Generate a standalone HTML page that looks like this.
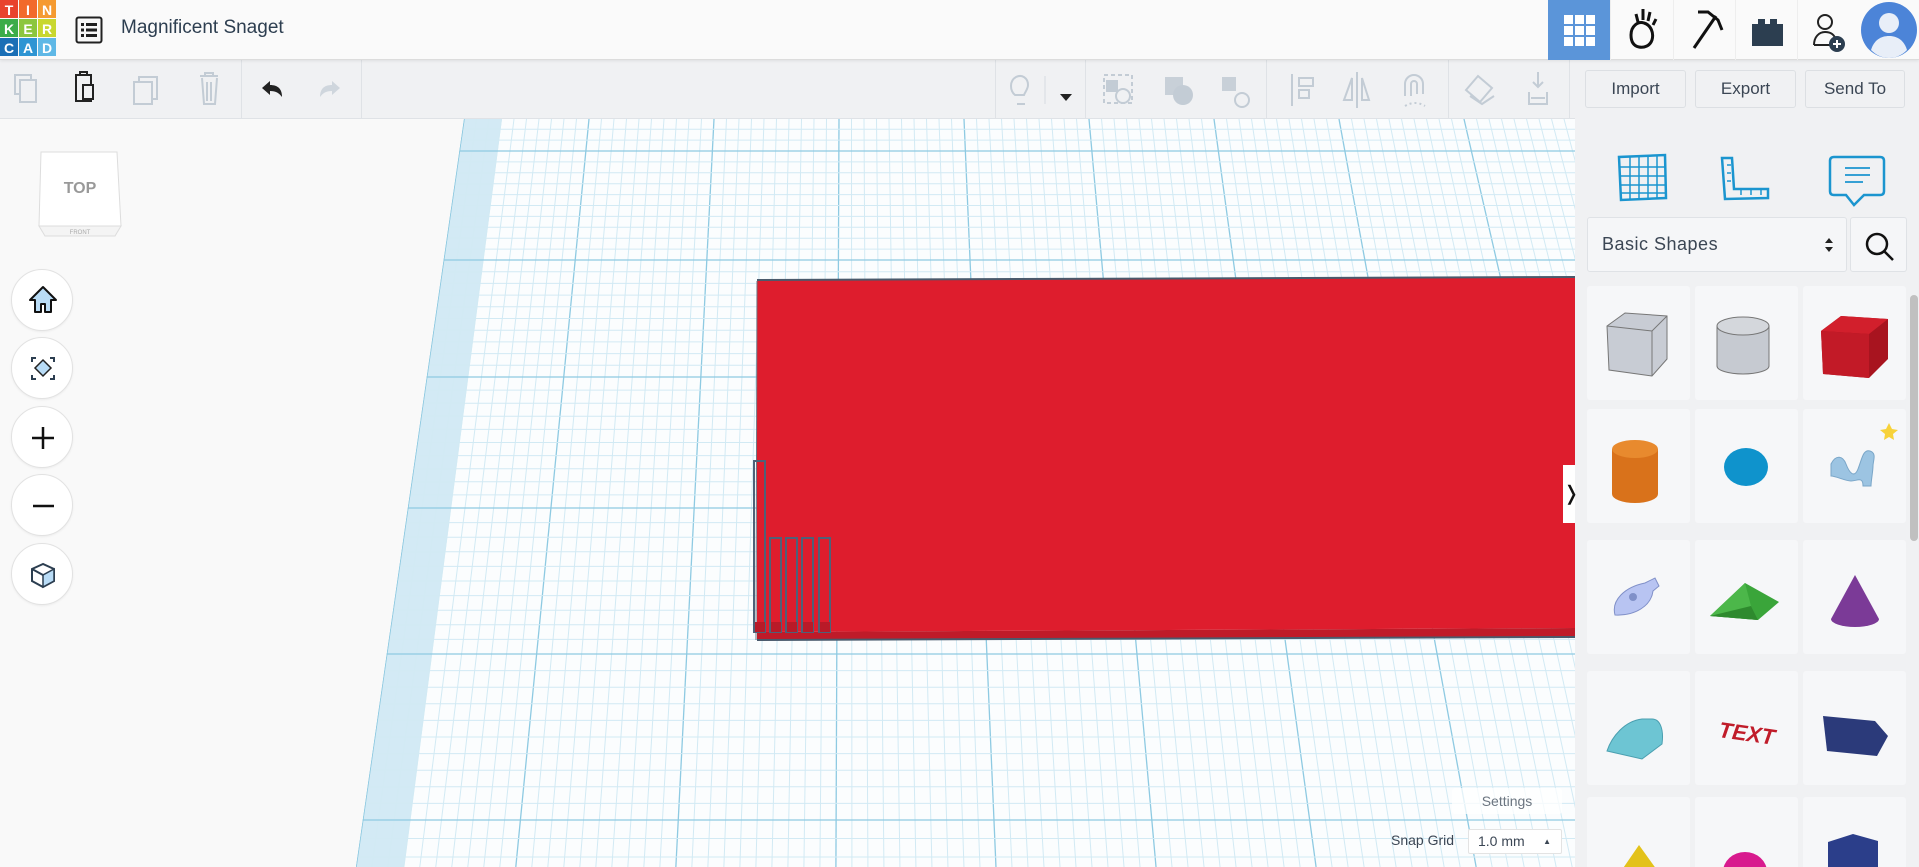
<!DOCTYPE html>
<html style="overflow:hidden;width:1919px;height:867px"><head><meta charset="utf-8">
<style>
*{margin:0;padding:0;box-sizing:border-box}
body{width:1919px;height:867px;overflow:hidden;background:#f9f9f9;font-family:"Liberation Sans",sans-serif;position:relative}
.abs{position:absolute}
#hdr{left:0;top:0;width:1919px;height:60px;background:#fafafa;border-bottom:1px solid #dcdcdc;box-shadow:0 1px 3px rgba(0,0,0,.08);z-index:5}
#tb{left:0;top:60px;width:1575px;height:59px;background:#f0f1f3;border-bottom:1px solid #dfe2e6;z-index:4}
.sep{position:absolute;top:0;width:1px;height:59px;background:#dfe2e6}
.btn{position:absolute;top:10px;height:38px;border:1px solid #dcdfe3;border-radius:3px;background:#f0f1f3;font-size:17px;color:#3b4654;text-align:center;line-height:36px}
#rp{left:1575px;top:60px;width:344px;height:807px;background:#f0f1f3;z-index:3;overflow:hidden}
.tile{position:absolute;width:103px;height:114px;background:#f6f7f9;border-radius:3px}
.nav{position:absolute;left:11px;width:62px;height:62px;border-radius:50%;background:#fff;border:1px solid #e2e2e2;box-shadow:0 1px 2px rgba(0,0,0,.06)}
.hc{position:absolute;top:0;width:62px;height:60px;border-left:1px solid #eee}
</style></head><body>

<svg class="abs" style="left:0;top:0" width="1919" height="867" id="grid">
<defs><clipPath id="gc"><polygon points="464,119 1575,119 1575,867 356,867"/></clipPath></defs>
<polygon points="464,119 1575,119 1575,867 356,867" fill="#fbfdfe"/>
<g clip-path="url(#gc)" id="gl"></g>
</svg>

<svg class="abs" style="left:0;top:0;z-index:2" width="1575" height="867">
<polygon points="757,280 1575,277 1575,628 757,632" fill="#de1d2d"/>
<line x1="757" y1="280" x2="1575" y2="277" stroke="#4a5a6c" stroke-width="2"/>
<polygon points="757,632 1575,628 1575,637 757,640" fill="#bf1b29"/>
<line x1="757" y1="640" x2="1575" y2="637" stroke="#4a5a6c" stroke-width="2"/>
<line x1="757" y1="281" x2="756" y2="640" stroke="#6a7480" stroke-width="1"/>
<g fill="none" stroke="#4e6178" stroke-width="2">
<rect x="754" y="461" width="11" height="171"/>
<rect x="770" y="538" width="11" height="94"/>
<rect x="786" y="538" width="11" height="94"/>
<rect x="802" y="538" width="11" height="94"/>
<rect x="819" y="538" width="11" height="94"/>
</g>
<g fill="#b91a28"><rect x="755" y="622" width="10" height="10"/><rect x="771" y="622" width="10" height="10"/><rect x="787" y="622" width="10" height="10"/><rect x="803" y="622" width="10" height="10"/><rect x="820" y="622" width="10" height="10"/></g>
</svg>

<script>
(function(){
var g=document.getElementById('gl'),s='';
var VX=850,VY=-2548;
function xa(x0,y){return VX+(x0-VX)*(y-VY)/(119-VY);}
s+='<polygon points="'+xa(464,119)+',119 '+xa(502,119)+',119 '+xa(502,867)+',867 '+xa(464,867)+',867" fill="#d3eaf5"/>';
for(var k=0;k<100;k++){var x0=464+12.5*k;var maj=(k%10==0);
s+='<line x1="'+xa(x0,119)+'" y1="119" x2="'+xa(x0,867)+'" y2="867" stroke="'+(maj?'#8ecae2':'#d2eaf4')+'" stroke-width="'+(maj?1.3:1)+'"/>';}
var M=[42,151,260,377,508,654,820,1005];
for(var i=0;i<M.length-1;i++){for(var j=0;j<10;j++){var y=M[i]+(M[i+1]-M[i])*j/10;var maj=j==0;
s+='<line x1="300" y1="'+y+'" x2="1575" y2="'+y+'" stroke="'+(maj?'#8ecae2':'#d2eaf4')+'" stroke-width="'+(maj?1.3:1)+'"/>';}}
s+='<line x1="464" y1="119" x2="356" y2="867" stroke="#8cc8e0" stroke-width="1.5"/>';
g.innerHTML=s;})();
</script>

<div id="hdr" class="abs">
 <svg class="abs" style="left:0;top:0" width="57" height="57">
  <g font-family="Liberation Sans" font-weight="bold" font-size="14" fill="#fff" text-anchor="middle">
  <rect x="0" y="0" width="18" height="18" fill="#e8432d"/><text x="9" y="15">T</text>
  <rect x="19" y="0" width="18" height="18" fill="#f26a2b"/><text x="28" y="15">I</text>
  <rect x="38" y="0" width="18" height="18" fill="#f59a30"/><text x="47" y="15">N</text>
  <rect x="0" y="19" width="18" height="18" fill="#3cac49"/><text x="9" y="34">K</text>
  <rect x="19" y="19" width="18" height="18" fill="#8cc63e"/><text x="28" y="34">E</text>
  <rect x="38" y="19" width="18" height="18" fill="#c8d730"/><text x="47" y="34">R</text>
  <rect x="0" y="38" width="18" height="18" fill="#1a6fb6"/><text x="9" y="53">C</text>
  <rect x="19" y="38" width="18" height="18" fill="#2e95d3"/><text x="28" y="53">A</text>
  <rect x="38" y="38" width="18" height="18" fill="#5fb8e6"/><text x="47" y="53">D</text>
  </g></svg>
 <svg class="abs" style="left:75px;top:16px" width="28" height="28"><rect x="1.5" y="1.5" width="25" height="25" rx="2" fill="none" stroke="#222" stroke-width="2"/><g fill="#222"><rect x="6" y="7" width="3" height="3"/><rect x="11" y="7" width="11" height="3"/><rect x="6" y="12.5" width="3" height="3"/><rect x="11" y="12.5" width="11" height="3"/><rect x="6" y="18" width="3" height="3"/><rect x="11" y="18" width="11" height="3"/></g></svg>
 <div class="abs" style="left:121px;top:17px;font-size:19px;color:#2d3e50">Magnificent Snaget</div>
 <div class="hc" style="left:1548px;background:#5b95d9;border:none"><svg width="62" height="60"><g fill="#fff"><rect x="16" y="15" width="9" height="9"/><rect x="27" y="15" width="9" height="9"/><rect x="38" y="15" width="9" height="9"/><rect x="16" y="26" width="9" height="9"/><rect x="27" y="26" width="9" height="9"/><rect x="38" y="26" width="9" height="9"/><rect x="16" y="37" width="9" height="9"/><rect x="27" y="37" width="9" height="9"/><rect x="38" y="37" width="9" height="9"/></g></svg></div>
 <div class="hc" style="left:1610px"><svg width="62" height="60"><g fill="none" stroke="#111" stroke-width="3"><path d="M20 35c0-9 7-14 13-12 7 2 10 10 8 17-2 6-8 8-13 7-5-1-8-5-8-12z"/><path d="M27 22l-2-8M32 20v-11M37 21l2-9M42 25l3-6"/></g></svg></div>
 <div class="hc" style="left:1673px"><svg width="62" height="60"><g fill="none" stroke="#111" stroke-width="3"><path d="M20 48l22-32"/><path d="M24 12h10l10 8 4 10"/></g></svg></div>
 <div class="hc" style="left:1735px"><svg width="62" height="60"><path fill="#2c3e50" d="M16 24h6v-5h7v5h5v-5h7v5h6v22h-31z"/></svg></div>
 <div class="hc" style="left:1797px"><svg width="62" height="60"><g fill="none" stroke="#222" stroke-width="2"><circle cx="27" cy="22" r="7"/><path d="M16 45c0-8 5-13 11-13s9 3 10 6M16 45h16"/></g><circle cx="39" cy="44" r="8" fill="#2c3e50"/><path d="M39 40v8M35 44h8" stroke="#fff" stroke-width="2"/></svg></div>
 <div class="hc" style="left:1858px;border:none"><svg width="62" height="60"><circle cx="31" cy="30" r="28" fill="#4c84d8"/><circle cx="31" cy="23" r="10" fill="#e8eef8"/><path d="M13 50c3-10 10-14 18-14s15 4 18 14c-5 5-11 8-18 8s-13-3-18-8z" fill="#e8eef8"/></svg></div>
</div>

<div id="tb" class="abs">
 <svg class="abs" style="left:0;top:0" width="1575" height="59">
  <g fill="none" stroke="#c3ccd5" stroke-width="2">
   <rect x="15" y="15" width="16" height="19"/><rect x="20" y="20" width="16" height="22" fill="#f0f1f3"/>
   <rect x="139" y="17" width="18" height="22"/><rect x="134" y="22" width="18" height="22" fill="#f0f1f3"/>
   <path d="M200 16h18M205 16v-3h8v3M202 18l2 26h11l2-26M207 22v19M211 22v19"/>
  </g>
  <g fill="none" stroke="#222" stroke-width="2"><rect x="76" y="15" width="15" height="26"/><rect x="83" y="25" width="10" height="14" fill="#f0f1f3"/><path d="M80 15v-3h7v3"/></g>
  <path d="M262 28l8-7v4c8 0 12 4 12 12-3-4-6-6-12-6v4z" fill="#222"/>
  <path d="M340 28l-8-7v4c-8 0-12 4-12 12 3-4 6-6 12-6v4z" fill="#cfd6dd"/>
  <g fill="none" stroke="#c3ccd5" stroke-width="2">
   <path d="M1017 44h8M1015 35c-5-4-6-14 1-18 6-3 12 1 12 8 0 4-3 7-4 10h-9z"/>
   <rect x="1104" y="15" width="28" height="28" stroke-dasharray="4 3"/>
   <path d="M1292 14v32M1299 18h14v8h-14zM1299 30h10v8h-10z"/>
   <path d="M1357 12v36M1352 18l-8 22h8zM1362 18l7 22h-7z"/>
   <path d="M1405 36v-12a9 9 0 0118 0v10M1411 36v-12a3 3 0 016 0v10" />
   <path d="M1405 46q10-6 20 0" stroke-dasharray="2 3"/>
   <path d="M1466 30l12-14 14 12-12 14zM1470 36l12 8 12-8"/>
   <path d="M1529 32v12h18v-12M1538 12v14M1533 22l5 5 5-5M1531 38h14"/>
  </g>
  <path d="M1060 34h12l-6 7z" fill="#222"/>
  <line x1="1045" y1="16" x2="1045" y2="44" stroke="#d6dbe0"/>
  <rect x="1106" y="20" width="12" height="12" fill="#c3ccd5"/><circle cx="1123" cy="36" r="7" fill="#f0f1f3" stroke="#c3ccd5" stroke-width="2"/>
  <rect x="1165" y="17" width="18" height="18" fill="#c8d0d8"/><circle cx="1183" cy="35" r="10" fill="#c3ccd5"/>
  <rect x="1222" y="17" width="14" height="14" fill="#c8d0d8"/><circle cx="1242" cy="40" r="7" fill="none" stroke="#c3ccd5" stroke-width="2"/>
 </svg>
 <div class="sep" style="left:241px"></div><div class="sep" style="left:361px"></div>
 <div class="sep" style="left:995px"></div><div class="sep" style="left:1085px"></div><div class="sep" style="left:1266px"></div><div class="sep" style="left:1448px"></div><div class="sep" style="left:1569px"></div>
</div>

<div id="rp" class="abs">
 <div class="btn" style="left:10px;width:101px">Import</div>
 <div class="btn" style="left:120px;width:101px">Export</div>
 <div class="btn" style="left:230px;width:100px">Send To</div>
 <svg class="abs" style="left:0;top:75px" width="344" height="80" fill="none" stroke="#1b95cf" stroke-width="2.5">
  <path d="M46 65l-2-43 46-2 1 43z"/><path d="M55 22v43M64 21v43M73 21v42M82 21v42M45 32h46M45 41h46M45 50h46M45 58h46" stroke-width="1.5"/>
  <path d="M150 64l-3-41h10l2 31h34v9z"/><path d="M152 30h4M152 38h4M152 46h4M166 55v5M176 55v5M186 55v5" stroke-width="1.5"/>
  <path d="M259 22h46q4 0 4 4v30q0 4-4 4h-16l-10 10-8-10h-12q-4 0-4-4v-30q0-4 4-4z"/><path d="M270 33h25M270 40h25M270 47h18" stroke-width="1.8"/>
 </svg>
 <div class="abs" style="left:12px;top:157px;width:260px;height:55px;background:#f5f6f8;border:1px solid #dfe2e6;border-radius:3px;font-size:18px;color:#3b4654;line-height:53px;padding-left:14px;letter-spacing:.5px">Basic Shapes
  <svg class="abs" style="right:12px;top:19px" width="10" height="16"><path d="M1 6l4-5 4 5zM1 10l4 5 4-5z" fill="#222"/></svg></div>
 <div class="abs" style="left:275px;top:157px;width:57px;height:55px;background:#f5f6f8;border:1px solid #dfe2e6;border-radius:3px">
  <svg width="57" height="55"><circle cx="26" cy="26" r="10" fill="none" stroke="#111" stroke-width="2.5"/><path d="M33 33l9 9" stroke="#111" stroke-width="2.5"/></svg></div>
 <div class="abs" style="left:335px;top:235px;width:8px;height:246px;background:#c0c0c0;border-radius:4px"></div>
 <div class="tile" style="left:12px;top:226px"><svg width="103" height="114"><polygon points="20,40 38,27 80,30 80,73 65,90 22,84" fill="#c8ccd4" stroke="#777"/><path d="M20,40 65,45 80,30M65,45V90" stroke="#777" fill="none"/></svg></div>
 <div class="tile" style="left:120px;top:226px"><svg width="103" height="114"><path d="M22 40v40a26 8 0 0 0 52 0v-40" fill="#c6cad1" stroke="#777"/><ellipse cx="48" cy="40" rx="26" ry="9" fill="#d4d7dc" stroke="#777"/></svg></div>
 <div class="tile" style="left:228px;top:226px"><svg width="103" height="114"><polygon points="18,45 38,30 85,33 85,73 66,92 20,88" fill="#a8141f"/><polygon points="18,45 38,30 85,33 66,48" fill="#d21f2c"/><polygon points="18,45 66,48 66,92 20,88" fill="#c21a27"/></svg></div>
 <div class="tile" style="left:12px;top:349px"><svg width="103" height="114"><path d="M25 40v45a23 9 0 0 0 46 0v-45" fill="#d9721b"/><ellipse cx="48" cy="40" rx="23" ry="9" fill="#e88a2e"/></svg></div>
 <div class="tile" style="left:120px;top:349px"><svg width="103" height="114"><ellipse cx="51" cy="58" rx="22" ry="19" fill="#0f93cc"/></svg></div>
 <div class="tile" style="left:228px;top:349px"><svg width="103" height="114"><path d="M28 55c5-10 12-8 15 0s8 15 12 5 5-20 12-18 3 10 3 15-2 15-2 20l-8 0c0-10-6-5-12-5s-15-5-20-5z" fill="#9cc4e2" stroke="#7aa6c8"/><path d="M86 14l3 6 6 1-5 4 1 6-5-3-5 3 1-6-5-4 6-1z" fill="#f7d23a"/></svg></div>
 <div class="tile" style="left:12px;top:480px"><svg width="103" height="114"><path d="M28 75c-4-15 10-28 30-32l10-5 4 8-6 5c-2 15-18 25-38 24z" fill="#b8c4f2" stroke="#8090c8"/><circle cx="46" cy="57" r="4" fill="#8090c8"/></svg></div>
 <div class="tile" style="left:120px;top:480px"><svg width="103" height="114"><polygon points="15,76 50,43 84,62 63,80" fill="#3aa53a"/><polygon points="15,76 50,43 56,66 63,80" fill="#4cb74a"/><polygon points="15,76 56,66 63,80" fill="#2e8a2e"/></svg></div>
 <div class="tile" style="left:228px;top:480px"><svg width="103" height="114"><path d="M52 35l-24 44a24 8 0 0 0 48 0z" fill="#7b3a97"/></svg></div>
 <div class="tile" style="left:12px;top:611px"><svg width="103" height="114"><path d="M20 80c5-15 18-30 35-32h10c8 0 12 10 10 25l-20 15z" fill="#6dc5d3" stroke="#4a9fb0"/></svg></div>
 <div class="tile" style="left:120px;top:611px"><svg width="103" height="114" font-family="Liberation Sans"><text x="52" y="70" font-size="22" font-weight="bold" fill="#c01c2a" text-anchor="middle" transform="rotate(8 52 62)" font-style="italic">TEXT</text></svg></div>
 <div class="tile" style="left:228px;top:611px"><svg width="103" height="114"><polygon points="20,45 72,50 85,65 74,85 24,80" fill="#2b3a7a"/></svg></div>
 <div class="tile" style="left:12px;top:737px"><svg width="103" height="114"><polygon points="52,48 30,80 75,80" fill="#e3c21a"/></svg></div>
 <div class="tile" style="left:120px;top:737px"><svg width="103" height="114"><ellipse cx="50" cy="75" rx="22" ry="20" fill="#d81a8e"/></svg></div>
 <div class="tile" style="left:228px;top:737px"><svg width="103" height="114"><polygon points="25,45 50,37 75,44 75,90 25,90" fill="#2b3e8a"/></svg></div>
</div>

<div class="abs" style="left:1563px;top:465px;width:12px;height:58px;background:#fff;z-index:4;font-size:20px;line-height:58px;color:#111;text-align:center">&#x276D;</div>

<svg class="abs" style="left:37px;top:150px" width="86" height="90">
 <path d="M4 2h76l4 74H2z" fill="#fff" stroke="#ddd"/><path d="M2 76h82l-6 10H8z" fill="#f4f4f4" stroke="#ddd"/>
 <text x="43" y="43" font-size="16" font-weight="bold" fill="#999" text-anchor="middle" font-family="Liberation Sans">TOP</text>
 <text x="43" y="84" font-size="6" fill="#aaa" text-anchor="middle" font-family="Liberation Sans">FRONT</text>
</svg>
<div class="nav" style="top:269px"><svg width="62" height="62"><path d="M31 17l-13 13h5v12h6v-8h4v8h6v-12h5z" fill="#b9dcf6" stroke="#111" stroke-width="2" stroke-linejoin="round"/></svg></div>
<div class="nav" style="top:337px"><svg width="62" height="62"><path d="M31 22l8 8-8 8-8-8z" fill="#b9dcf6" stroke="#222" stroke-width="1.5"/><path d="M20 24v-4h4M42 24v-4h-4M20 37v4h4M42 37v4h-4" fill="none" stroke="#2c3e50" stroke-width="2"/></svg></div>
<div class="nav" style="top:406px"><svg width="62" height="62"><path d="M31 20v22M20 31h22" stroke="#111" stroke-width="2.5"/></svg></div>
<div class="nav" style="top:474px"><svg width="62" height="62"><path d="M21 31h21" stroke="#111" stroke-width="2.5"/></svg></div>
<div class="nav" style="top:543px"><svg width="62" height="62"><path d="M31 20l-11 5v12l11 6 11-6v-12z" fill="none" stroke="#2c3e50" stroke-width="2"/><path d="M31 31v12l11-6v-12z" fill="#b9dcf6" stroke="#2c3e50" stroke-width="1.5"/><path d="M20 25l11 6" stroke="#2c3e50" stroke-width="2"/></svg></div>

<div class="abs" style="left:1452px;top:788px;width:110px;height:26px;background:rgba(255,255,255,.75);border-radius:3px;font-size:14px;color:#6b7580;text-align:center;line-height:26px">Settings</div>
<div class="abs" style="left:1391px;top:832px;font-size:14px;color:#3b4654">Snap Grid</div>
<div class="abs" style="left:1468px;top:829px;width:94px;height:25px;background:#fff;border:1px solid #e3e3e3;border-radius:2px;font-size:14px;color:#3b4654;line-height:23px;padding-left:9px">1.0 mm<span style="position:absolute;right:10px;top:0;font-size:8px">&#9650;</span></div>
</body></html>
